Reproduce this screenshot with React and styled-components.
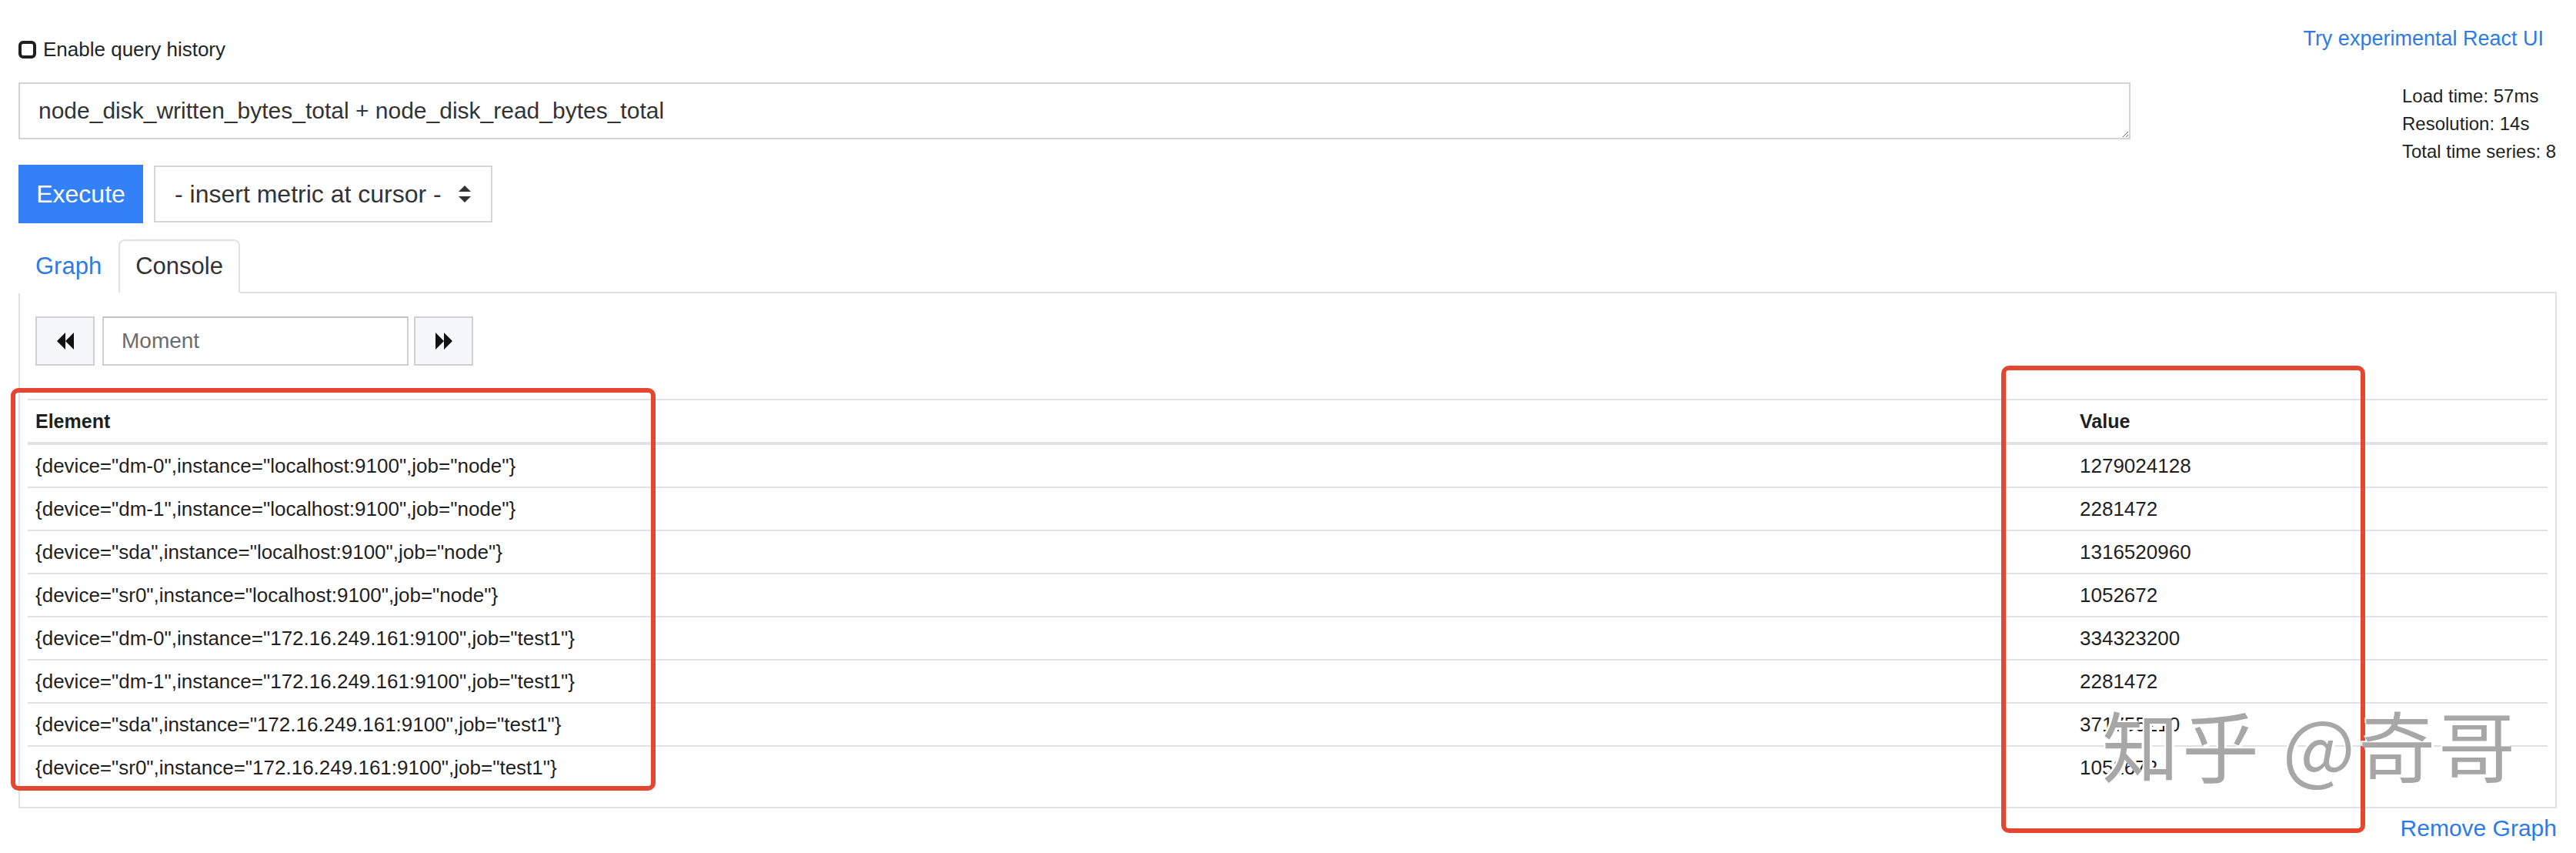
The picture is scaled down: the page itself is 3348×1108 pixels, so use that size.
import React from 'react'
import styled, { createGlobalStyle } from 'styled-components'

const GlobalStyle = createGlobalStyle`
  body {
    margin: 0;
    background: #fff;
    color: #212529;
    font-family: "Liberation Sans", Arial, sans-serif;
  }
`

const Page = styled.div`
  position: relative;
  width: 3348px;
  height: 1108px;
  box-sizing: border-box;
  padding: 30px 25px 0 24px;
  overflow: hidden;
`

const TopBar = styled.div`
  display: flex;
  justify-content: space-between;
  align-items: flex-start;
`

const HistoryLabel = styled.label`
  display: flex;
  align-items: center;
  gap: 9px;
  margin-top: 14px;
  font-size: 26px;
  line-height: 40px;
`

const Checkbox = styled.span`
  width: 15px;
  height: 15px;
  border: 4px solid #1f1f1f;
  border-radius: 6px;
`

const TopLink = styled.a`
  margin-right: 17px;
  font-size: 27px;
  line-height: 40px;
  color: #2d7be6;
  text-decoration: none;
`

const QueryRow = styled.div`
  display: flex;
  align-items: flex-start;
  height: 74px;
  margin-top: 23px;
`

const QueryInput = styled.textarea`
  width: 2745px;
  height: 74px;
  box-sizing: border-box;
  padding: 16px 24px;
  border: 2px solid #d2d4d6;
  font-family: "Liberation Sans", Arial, sans-serif;
  font-size: 30px;
  line-height: 38px;
  color: #333;
  resize: vertical;
  outline: none;
`

const Stats = styled.div`
  margin-left: 353px;
  font-size: 24px;
  line-height: 36px;
  color: #1f1f1f;
`

const ActionRow = styled.div`
  display: flex;
  align-items: center;
  gap: 14px;
  margin-top: 33px;
`

const ExecuteButton = styled.button`
  width: 162px;
  height: 76px;
  border: none;
  background: #3480f6;
  color: #fff;
  font-family: "Liberation Sans", Arial, sans-serif;
  font-size: 32px;
`

const SelectBox = styled.div`
  display: flex;
  align-items: center;
  justify-content: space-between;
  width: 440px;
  height: 74px;
  box-sizing: border-box;
  padding: 0 26px 0 25px;
  border: 2px solid #d6d6d6;
  font-size: 32px;
  color: #333;
`

const Tabs = styled.div`
  display: flex;
  margin-top: 21px;
  border-bottom: 2px solid #dee2e6;
`

const Tab = styled.div`
  margin-bottom: -2px;
  padding: 15px 20px;
  border: 2px solid ${p => (p.$active ? '#dee2e6' : 'transparent')};
  border-bottom-color: ${p => (p.$active ? '#fff' : 'transparent')};
  border-radius: 8px 8px 0 0;
  font-size: 31px;
  line-height: 36px;
  color: ${p => (p.$active ? '#333' : '#2d7be6')};
  background: #fff;
`

const Panel = styled.div`
  padding: 30px 10px 24px;
  border: 2px solid #dee2e6;
  border-top: none;
`

const MomentRow = styled.div`
  display: flex;
  align-items: center;
  margin-left: 10px;
`

const MomentButton = styled.button`
  display: flex;
  align-items: center;
  justify-content: center;
  width: 77px;
  height: 64px;
  padding: 0;
  margin-right: ${p => p.$gap || 0}px;
  border: 2px solid #d0d0d0;
  background: #f6f7f8;
`

const MomentInput = styled.div`
  width: 398px;
  height: 64px;
  box-sizing: border-box;
  margin-right: 7px;
  padding: 0 23px;
  border: 2px solid #d0d0d0;
  border-top-color: #c4c4c4;
  font-size: 28px;
  line-height: 60px;
  color: #6c6c6c;
`

const ResultTable = styled.table`
  width: 100%;
  margin-top: 43px;
  border-collapse: collapse;
  font-size: 26px;
  line-height: 28px;
  color: #1f1f1f;
`

const Th = styled.th`
  width: ${p => (p.$width ? `${p.$width}px` : 'auto')};
  padding: 13px 10px;
  border-top: 2px solid #dee2e6;
  border-bottom: 4px solid #dee2e6;
  text-align: left;
  font-weight: bold;
  font-size: 25px;
`

const Td = styled.td`
  padding: 13px 10px;
  border-top: 2px solid #dee2e6;
`

const Footer = styled.div`
  display: flex;
  justify-content: flex-end;
  margin-top: 6px;
`

const RemoveLink = styled.a`
  font-size: 30px;
  line-height: 40px;
  color: #2d7be6;
  text-decoration: none;
`

const Annotation = styled.div`
  position: absolute;
  left: ${p => p.$x}px;
  top: ${p => p.$y}px;
  width: ${p => p.$w}px;
  height: ${p => p.$h}px;
  box-sizing: border-box;
  border: 6px solid #e4462f;
  border-radius: 10px;
  pointer-events: none;
`

const Watermark = styled.div`
  position: absolute;
  left: 2732px;
  top: 906px;
  font-family: "Noto Sans CJK SC", sans-serif;
  font-size: 100px;
  line-height: 120px;
  letter-spacing: 4px;
  color: rgba(160, 160, 160, 0.92);
  text-shadow: 3px 3px 0 #fff, -2px -2px 0 #fff;
  white-space: pre;
  pointer-events: none;
`

const rows = [
  ['{device="dm-0",instance="localhost:9100",job="node"}', '1279024128'],
  ['{device="dm-1",instance="localhost:9100",job="node"}', '2281472'],
  ['{device="sda",instance="localhost:9100",job="node"}', '1316520960'],
  ['{device="sr0",instance="localhost:9100",job="node"}', '1052672'],
  ['{device="dm-0",instance="172.16.249.161:9100",job="test1"}', '334323200'],
  ['{device="dm-1",instance="172.16.249.161:9100",job="test1"}', '2281472'],
  ['{device="sda",instance="172.16.249.161:9100",job="test1"}', '371755210'],
  ['{device="sr0",instance="172.16.249.161:9100",job="test1"}', '1052672'],
]

const SortArrows = () => (
  <svg width="16" height="22" viewBox="0 0 16 22">
    <path d="M8 0 L16 8 L0 8 Z M0 14 L16 14 L8 22 Z" fill="#333" />
  </svg>
)

const Rewind = ({ flip }) => (
  <svg width="22" height="22" viewBox="0 0 22 22" style={flip ? { transform: 'scaleX(-1)' } : undefined}>
    <path d="M11 0 L11 22 L0 11 Z M22 0 L22 22 L11 11 Z" fill="#111" />
  </svg>
)

export default function App() {
  return (
    <Page>
      <GlobalStyle />
      <TopBar>
        <HistoryLabel>
          <Checkbox />
          Enable query history
        </HistoryLabel>
        <TopLink href="#">Try experimental React UI</TopLink>
      </TopBar>

      <QueryRow>
        <QueryInput defaultValue="node_disk_written_bytes_total + node_disk_read_bytes_total" />
        <Stats>
          <div>Load time: 57ms</div>
          <div>Resolution: 14s</div>
          <div>Total time series: 8</div>
        </Stats>
      </QueryRow>

      <ActionRow>
        <ExecuteButton>Execute</ExecuteButton>
        <SelectBox>
          <span>- insert metric at cursor -</span>
          <SortArrows />
        </SelectBox>
      </ActionRow>

      <Tabs>
        <Tab>Graph</Tab>
        <Tab $active>Console</Tab>
      </Tabs>

      <Panel>
        <MomentRow>
          <MomentButton $gap={10}><Rewind /></MomentButton>
          <MomentInput>Moment</MomentInput>
          <MomentButton><Rewind flip /></MomentButton>
        </MomentRow>

        <ResultTable>
          <thead>
            <tr>
              <Th>Element</Th>
              <Th $width={598}>Value</Th>
            </tr>
          </thead>
          <tbody>
            {rows.map(([el, val], i) => (
              <tr key={i}>
                <Td>{el}</Td>
                <Td>{val}</Td>
              </tr>
            ))}
          </tbody>
        </ResultTable>
      </Panel>

      <Footer>
        <RemoveLink href="#">Remove Graph</RemoveLink>
      </Footer>

      <Annotation $x={14} $y={504} $w={838} $h={523} />
      <Annotation $x={2601} $y={475} $w={473} $h={607} />
      <Watermark>{'知乎 @奇哥'}</Watermark>
    </Page>
  )
}
